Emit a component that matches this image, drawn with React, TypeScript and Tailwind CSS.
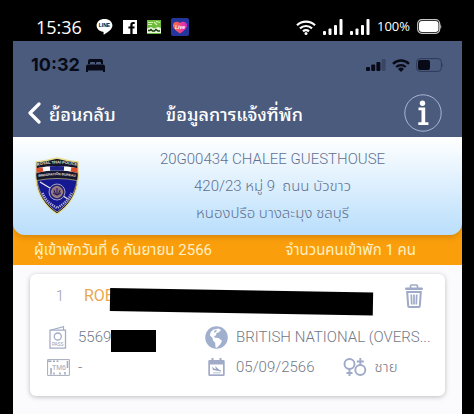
import { ReactNode } from "react";

type DetailProps = {
  icon: ReactNode;
  children: ReactNode;
};

const WifiIcon = () => (
  <svg viewBox="0 0 20 16" className="h-4 w-5" fill="none" stroke="currentColor" strokeWidth="2.2">
    <path d="M1 6.2a13 13 0 0 1 18 0M4 9.4a8.7 8.7 0 0 1 12 0M7 12.4a4.4 4.4 0 0 1 6 0" />
    <circle cx="10" cy="14.4" r="1.5" fill="currentColor" stroke="none" />
  </svg>
);

const SignalIcon = () => (
  <svg viewBox="0 0 20 16" className="h-4 w-5" fill="currentColor">
    <rect x="0" y="12" width="3" height="4" rx="1" />
    <rect x="5.5" y="9.5" width="3" height="6.5" rx="1" />
    <rect x="11" y="6" width="3" height="10" rx="1" />
    <rect x="16.5" y="0" width="3" height="16" rx="1" />
  </svg>
);

const PhoneSignalIcon = () => (
  <svg viewBox="0 0 20 12" className="h-3 w-5" fill="currentColor">
    <rect x="0" y="8" width="4" height="4" rx="1" />
    <rect x="5.2" y="5.5" width="4" height="6.5" rx="1" />
    <rect x="10.4" y="3" width="4" height="9" rx="1" />
    <rect x="15.6" y="0" width="4" height="12" rx="1" opacity="0.25" />
  </svg>
);

const PhoneWifiIcon = () => (
  <svg viewBox="0 0 18 13" className="h-[13px] w-[18px]" fill="none" stroke="currentColor" strokeWidth="2.4">
    <path d="M1 4.8a11.5 11.5 0 0 1 16 0M4.2 8a7 7 0 0 1 9.6 0" />
    <path d="M6 10a4.3 4.3 0 0 1 6 0l-3 3Z" fill="currentColor" stroke="none" />
  </svg>
);

const LineIcon = () => (
  <svg viewBox="0 0 17 17" className="size-[17px]">
    <path
      d="M8.5 1C4 1 .6 3.7.6 7.5c0 3.3 2.7 5.8 6.5 6.3.7.2.5.9.4 2.2 0 .6.4.6 1 .2 2.6-1.6 7.9-4.6 7.9-8.7C16.4 3.7 13 1 8.5 1Z"
      fill="#fff"
    />
    <text x="8.5" y="9.4" fontSize="5" fontWeight="700" textAnchor="middle" fill="#000" fontFamily="Liberation Sans, sans-serif">
      LINE
    </text>
  </svg>
);

const FacebookIcon = () => (
  <svg viewBox="0 0 14 14" className="size-[14px]">
    <rect width="14" height="14" fill="#fff" />
    <path d="M7.3 14V8.6H5.4V6.4h1.9V4.8c0-1.9 1.1-2.8 2.8-2.8h1.6v2h-1.1c-.8 0-1 .4-1 1v1.4h2.1l-.3 2.2H9.6V14Z" fill="#000" />
  </svg>
);

const NewsIcon = () => (
  <svg viewBox="0 0 14 14" className="size-[14px]">
    <rect width="14" height="14" fill="#6dbb3c" />
    <path d="M1 2.5h5M1 4.5h4M7 2l3 3M9 1.5l4 1" stroke="#d5f2ae" strokeWidth="1.2" />
    <path d="M0 8.5 4 7l3 1.5L11 7l3 1v6H0Z" fill="#e8f6dc" />
    <path d="M1 10.5h2l1-1 1.5 1.5h2L9 9.500 11 11h2" stroke="#1c3a12" strokeWidth="1.5" fill="none" />
    <path d="M0 13.5h14" stroke="#69b83c" />
  </svg>
);

const HeartIcon = () => (
  <svg viewBox="0 0 18 18" className="size-[18px]">
    <defs>
      <linearGradient id="heart" x1="0" x2="1">
        <stop offset="0" stopColor="#ff7038" />
        <stop offset="1" stopColor="#dc20c8" />
      </linearGradient>
    </defs>
    <rect width="18" height="18" rx="2" fill="#24369c" />
    <path d="M9 15.5C5 13 2 10.5 2 7.3 2 3.5 6.5 2.5 9 5c2.5-2.5 7-1.5 7 2.3 0 3.2-3 5.7-7 8.2Z" fill="url(#heart)" />
    <text x="9" y="10.5" fontSize="5" fontStyle="italic" fontWeight="700" textAnchor="middle" fill="#fff" fontFamily="Liberation Sans, sans-serif">
      Live
    </text>
  </svg>
);

const BedIcon = () => (
  <svg viewBox="0 0 19 13" className="h-[13px] w-[19px]" fill="currentColor">
    <path d="M2 5V2a2 2 0 0 1 2-2h11a2 2 0 0 1 2 2v3h-2V4a1 1 0 0 0-1-1h-3a1 1 0 0 0-1 1v1H9V4a1 1 0 0 0-1-1H5a1 1 0 0 0-1 1v1Z" />
    <path d="M2 5.5h15a2 2 0 0 1 2 2V13h-2v-1.5H2V13H0V7.5a2 2 0 0 1 2-2Z" />
  </svg>
);

const PoliceBadge = () => (
  <svg viewBox="0 0 44 58" className="h-[58px] w-11 shrink-0 overflow-visible" fontFamily="Liberation Sans, sans-serif">
    <path
      d="M1 5Q11 4 22 1q11 3 21 4v10q1 3 0 7c-1 15-9 27-21 35C10 49 2 37 1 22q-1-4 0-7Z"
      fill="#15152c"
      stroke="#e8dc8c"
      strokeWidth="1.3"
    />
    <path id="badgeTop" d="M2 9Q22 4 42 9" fill="none" />
    <text fontSize="4" fontWeight="700" fill="#f2efd4" textAnchor="middle">
      <textPath href="#badgeTop" startOffset="50%">ROYAL THAI POLICE</textPath>
    </text>
    <path d="M1.5 13.5Q22 9 42.5 13.5" fill="none" stroke="#fff" strokeWidth="4.4" />
    <path d="M1.5 13.5 8 12.3M36 12.3l6.5 1.2" fill="none" stroke="#dc5030" strokeWidth="4.4" />
    <path d="M15 11.5Q22 11 29 11.5" fill="none" stroke="#1d2388" strokeWidth="4.4" />
    <path id="badgeMid" d="M1 20.5Q22 16 43 20.5" fill="none" />
    <text fontSize="3.3" fontWeight="700" fill="#e9e5e2" textAnchor="middle">
      <textPath href="#badgeMid" startOffset="50%">IMMIGRATION BUREAU</textPath>
    </text>
    <path d="M2 23.5Q22 19.5 42 23.5C40 37 33 47 22 55 11 47 4 37 2 23.5Z" fill="#151891" stroke="#e8dc8c" strokeWidth=".6" />
    <path d="m5 25 28 17" stroke="#e7e4ef" strokeWidth="1.4" />
    <circle cx="22" cy="35" r="8" fill="#252677" stroke="#a1a0cc" strokeWidth="1" />
    <circle cx="22" cy="35" r="5.4" fill="#8a6d86" stroke="#d6a779" strokeWidth=".8" />
    <path d="M19 33q1 4 3 5 2-1 3-5M22 31v7M18 36l4 2 4-2" fill="none" stroke="#201b52" strokeWidth="1" />
    <path d="M7.5 36c3 7 7.5 11 14.5 15 7-4 11.5-8 14.5-15" fill="none" stroke="#b9b8df" strokeWidth="2.4" strokeDasharray="1.2 1" />
  </svg>
);

const BackIcon = () => (
  <svg viewBox="0 0 14 22" className="h-[22px] w-[14px]" fill="none" stroke="currentColor" strokeWidth="3.2">
    <path d="M12 2 3 11l9 9" strokeLinecap="round" strokeLinejoin="round" />
  </svg>
);

const InfoIcon = () => (
  <svg viewBox="0 0 38 38" className="size-[38px]">
    <circle cx="19" cy="19" r="18.2" fill="none" stroke="#a9b4d2" strokeWidth="1" />
    <circle cx="18.5" cy="9.3" r="2.7" fill="#fff" />
    <path d="M14.5 13.5h6.7v14.8h3.2V31H14.3v-2.7h3.2V16.2h-3Z" fill="#fff" />
  </svg>
);

const TrashIcon = () => (
  <svg viewBox="0 0 18 24" className="h-6 w-[18px]" fill="none" stroke="#9fa9c8">
    <path d="M1.2 4.8h15.6" strokeWidth="2.4" strokeLinecap="round" />
    <path d="M5.5 4V2.2Q5.5 1 6.7 1h4.6q1.2 0 1.2 1.2V4" strokeWidth="1.7" />
    <path d="m2.2 8 1 14q0 .9 1 .9h9.6q1 0 1-.9l1-14Z" strokeWidth="2" />
    <path d="m6.3 10.5.4 10M9 10.5v10M11.7 10.5l-.4 10" strokeWidth="1.7" />
  </svg>
);

const PassportIcon = () => (
  <svg viewBox="0 0 18 23" className="h-[23px] w-[18px]" fill="none" stroke="#a3adc6">
    <path d="M1 4.2h15.5v18H1Z" strokeWidth="1.3" />
    <path d="m2 4 12.5-3.3V4" strokeWidth="1.2" />
    <circle cx="8.8" cy="10.5" r="3.5" strokeWidth="1.3" />
    <text x="8.8" y="19.5" fontSize="4.5" textAnchor="middle" fill="#8f99b5" stroke="none" fontFamily="Liberation Sans, sans-serif">
      PASS
    </text>
  </svg>
);

const GlobeIcon = () => (
  <svg viewBox="0 0 23 23" className="size-[23px]">
    <circle cx="11.5" cy="11.5" r="11.3" fill="#a1afce" />
    <path d="M13.5 2.5 16 4l-2.200 2.300-2.300.7-.5 2.500-2 .5 1 1.700 3.500.2 3.500 2.800-1.500 3.300-2.500 2.500-1 1.200-1.500-.5-.3-4.500L8 14.500 7.500 12 5 9.500l.5-3L8 3.800Z" fill="#fff" />
    <path d="M9.5 4.5 12 4l-1 2-2 .8Z" fill="#a1afce" />
  </svg>
);

const CardIcon = () => (
  <svg viewBox="0 0 23 17" className="h-[17px] w-[23px]" fill="none" stroke="#a4abba">
    <path d="M.6.6h21.800v15.800H.6Z" strokeWidth="1" />
    <path d="M1 2.2h3.5M6 2.2h2M9.5 2.2h2M20.5 2v7M4 9v6.5M7 13.5v2M13 13.5v2M18 13v2.5" strokeWidth="1.6" />
    <text x="12" y="11" fontSize="7" textAnchor="middle" fill="#9ba3b4" stroke="none" fontFamily="Liberation Sans, sans-serif">
      TM6
    </text>
  </svg>
);

const CalendarIcon = () => (
  <svg viewBox="0 0 17 18" className="h-[18px] w-[17px]">
    <path d="M1.5 2h2V0h2v2h6V0h2v2h2q1.200 0 1.200 1.200v13.500q0 1.200-1.200 1.200h-14Q.3 17.900.3 16.700V3.200Q.3 2 1.500 2Z" fill="#a1abc8" />
    <path d="M2 6.5h13v9.8H2Z" fill="#fff" />
    <path d="m4 8.5 2.5 2.2 1.3.2L7.2 8l4.2 4 1.8.6-.3.9-8-1.6Z" fill="#9aa5c3" />
    <path d="M5 14.8h7.5" stroke="#b6bfd3" />
  </svg>
);

const GenderIcon = () => (
  <svg viewBox="0 0 24 18" className="h-[18px] w-6" fill="none" stroke="#9fa9c8" strokeWidth="1.9">
    <circle cx="6.5" cy="6" r="5" />
    <path d="M6.5 11v7M3.5 15h6" />
    <circle cx="17.3" cy="12" r="5" />
    <path d="M17.3 7V0M13.8 3.5h7" />
  </svg>
);

const Detail = ({ icon, children }: DetailProps) => (
  <div className="flex items-center gap-2">
    <span className="flex w-6 shrink-0 justify-center">{icon}</span>
    <span className="whitespace-nowrap">{children}</span>
  </div>
);

const App = () => {
  return (
    <div className="min-h-screen bg-black pr-3 pl-[13px] font-['Roboto','Noto_Sans_Thai',sans-serif]">
      <div className="flex h-[41px] items-center justify-between pt-3 pr-5 pl-[23px] text-white">
        <div className="flex items-center">
          <span className="mr-[14px] font-['Open_Sans',sans-serif] text-lg">15:36</span>
          <div className="flex items-center gap-[10px]">
            <LineIcon />
            <FacebookIcon />
            <NewsIcon />
            <HeartIcon />
          </div>
        </div>
        <div className="flex items-center gap-[7px]">
          <WifiIcon />
          <SignalIcon />
          <SignalIcon />
          <span className="font-['Open_Sans',sans-serif] text-[13px]">100%</span>
          <svg viewBox="0 0 25 15" className="h-[15px] w-[25px]">
            <rect x=".7" y=".7" width="22" height="13.6" rx="4" fill="none" stroke="#c8c8c8" strokeWidth="1.2" />
            <rect x="2" y="2" width="19.5" height="11" rx="3" fill="#fff" />
            <path d="M23.5 5q1.5 2.5 0 5Z" fill="#fff" />
          </svg>
        </div>
      </div>

      <div className="flex min-h-[373px] flex-col bg-[#fbfbfe]">
        <header className="bg-[#4b5b7e] text-white">
          <div className="flex h-12 items-center justify-between px-[18px] text-[#080b17]">
            <div className="flex items-center gap-[6px] font-['Inter',sans-serif] text-lg font-bold">
              <span>10:32</span>
              <BedIcon />
            </div>
            <div className="flex items-center gap-[6px]">
              <PhoneSignalIcon />
              <PhoneWifiIcon />
              <svg viewBox="0 0 28 14" className="h-[14px] w-7">
                <rect x=".6" y=".6" width="24.8" height="12.8" rx="3.5" fill="none" stroke="#2e3a58" />
                <rect x="2" y="2" width="12" height="10" rx="2" fill="#080b17" />
                <path d="M26.5 5q1.5 2 0 4Z" fill="#2e3a58" />
              </svg>
            </div>
          </div>
          <nav className="grid h-12 grid-cols-[1fr_auto_1fr] items-center pr-5 pl-[14px] font-['Noto_Sans_Thai_Looped','Loma','Garuda','Noto_Sans_Thai',sans-serif] text-lg font-medium">
            <button type="button" className="flex items-center gap-2 justify-self-start">
              <BackIcon />
              ย้อนกลับ
            </button>
            <h1>ข้อมูลการแจ้งที่พัก</h1>
            <button type="button" aria-label="Info" className="justify-self-end">
              <InfoIcon />
            </button>
          </nav>
        </header>

        <section className="bg-[#fa9e0b]">
          <div className="flex h-[98px] items-center rounded-b-xl bg-linear-to-b from-white to-[#b9defb] pr-5 pl-[22px] shadow-md">
            <PoliceBadge />
            <address className="flex-1 pl-6 text-center text-[15px] leading-[27px] font-light text-[#5f7190] not-italic">
              <p>20G00434 CHALEE GUESTHOUSE</p>
              <p>420/23 หมู่ 9&nbsp; ถนน บัวขาว</p>
              <p>หนองปรือ บางละมุง ชลบุรี</p>
            </address>
          </div>
          <div className="flex h-[30px] items-center justify-between pr-[46px] pl-[21px] text-[15px] text-[#fff0c4]">
            <span>ผู้เข้าพักวันที่ 6 กันยายน 2566</span>
            <span>จำนวนคนเข้าพัก 1 คน</span>
          </div>
        </section>

        <main className="px-[17px] pt-[9px]">
          <article className="rounded-md bg-white pt-2 pr-[22px] pb-[17px] pl-4 text-[15px] font-light text-[#727988] shadow-[0_1px_5px_rgba(0,0,0,0.25)]">
            <div className="relative flex h-7 items-center">
              <span className="w-7 text-center text-[#98a0b5]">1</span>
              <span className="ml-[10px] flex-1 text-base font-normal text-[#e9a850]">ROB</span>
              <button type="button" aria-label="Delete">
                <TrashIcon />
              </button>
              <span className="absolute top-[6px] right-[50px] left-16 h-[23px] origin-left rotate-1 bg-black" />
            </div>
            <div className="mt-[14px] grid grid-cols-[158px_1fr] gap-y-[5px] leading-6">
              <Detail icon={<PassportIcon />}>
                <span className="flex h-[26px] items-center">
                  5569
                  <span className="mt-2 h-[22px] w-[45px] bg-black" />
                </span>
              </Detail>
              <Detail icon={<GlobeIcon />}>BRITISH NATIONAL (OVERS...</Detail>
              <Detail icon={<CardIcon />}>-</Detail>
              <div className="flex gap-7">
                <Detail icon={<CalendarIcon />}>05/09/2566</Detail>
                <Detail icon={<GenderIcon />}>ชาย</Detail>
              </div>
            </div>
          </article>
        </main>
      </div>
    </div>
  );
};

export default App;
